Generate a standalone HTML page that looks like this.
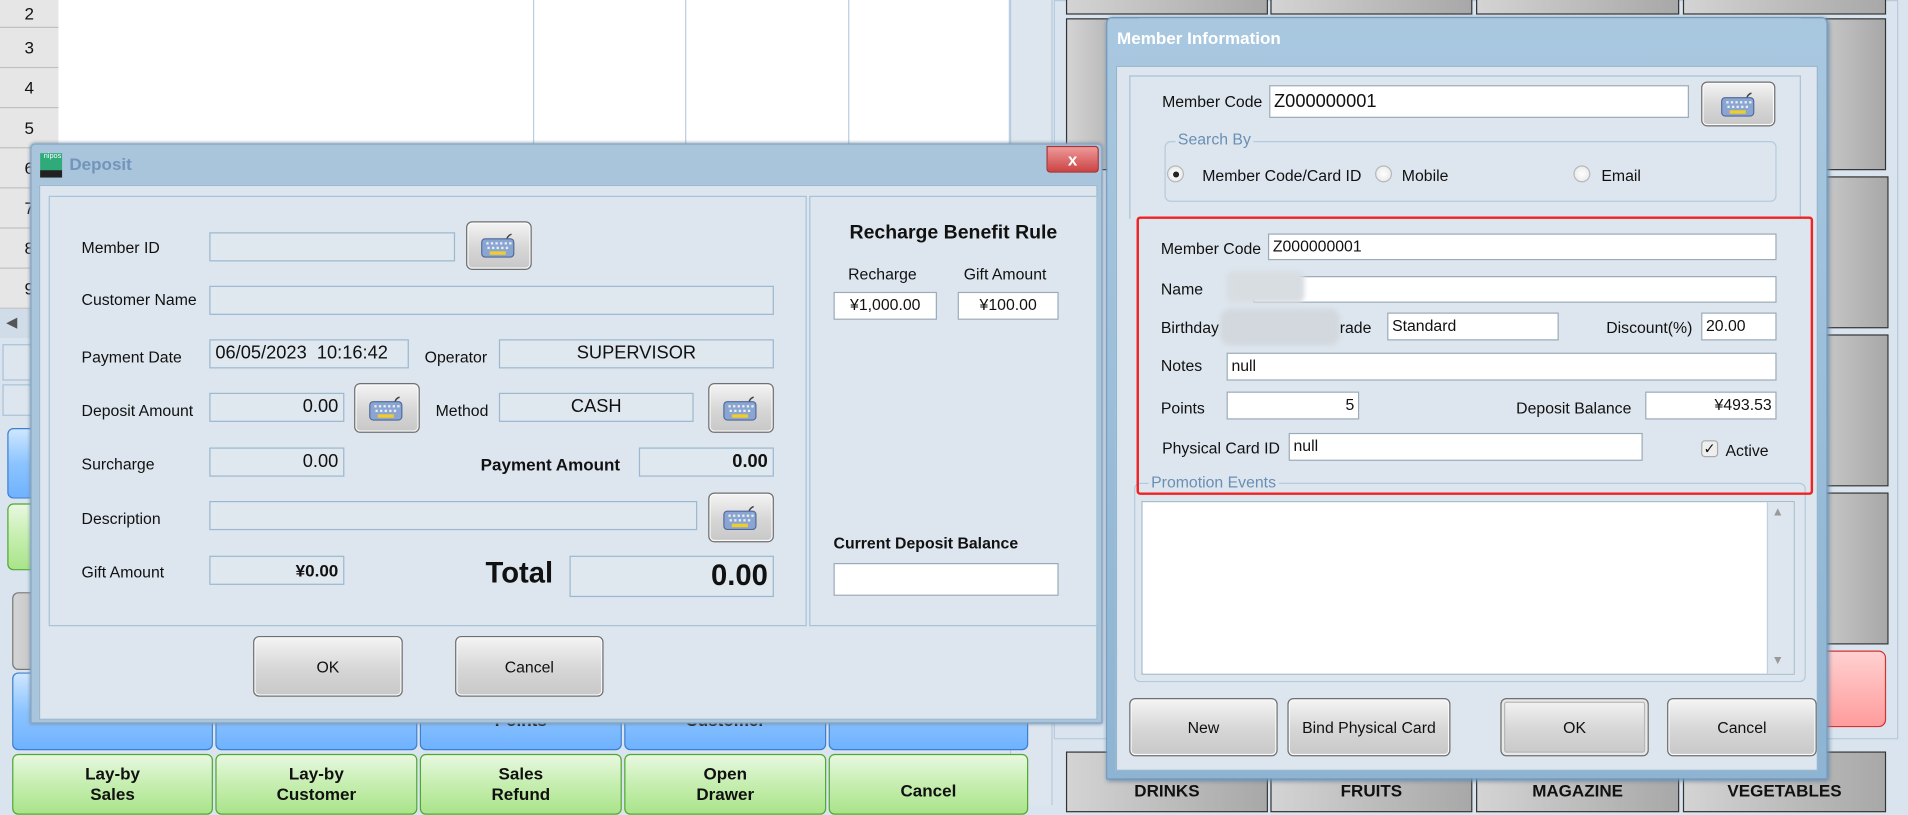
<!DOCTYPE html>
<html><head><meta charset="utf-8"><style>
*{box-sizing:border-box;margin:0;padding:0}
html,body{width:1908px;height:805px;overflow:hidden;background:#d9e4ee}
#w{position:absolute;left:0;top:0;width:1568px;height:662px;transform:scale(1.21684,1.2160);transform-origin:0 0;font-family:"Liberation Sans",sans-serif;font-size:13px;color:#111}
.a{position:absolute}
.t{position:absolute;white-space:nowrap}
.f{position:absolute;background:#dfe7ef;border:1px solid #9cb8d0;font-size:15px;line-height:22px;padding:0 4px;white-space:nowrap}
.wf{position:absolute;background:#fff;border:1px solid #9aaab8;font-size:14px;line-height:20px;padding:0 3px;white-space:nowrap}
.btn{position:absolute;border:1px solid #707070;border-radius:5px;background:linear-gradient(#f4f4f4,#d6d6d6 55%,#c8c8c8);box-shadow:inset 0 0 0 1px #fafafa;display:flex;align-items:center;justify-content:center;font-size:13px;color:#111}
.gb{position:absolute;border:1px solid #333;background:linear-gradient(90deg,#d4d4d4,#bdbdbd 50%,#a8a8a8)}
.bl{position:absolute;border:1px solid #3a7fd0;border-radius:5px;background:linear-gradient(#cfe6ff,#8cc4ff 50%,#70b2ff)}
.gr{position:absolute;border:1px solid #4fa830;border-radius:5px;background:linear-gradient(#e8f8e0,#c6eeb0 50%,#a9e48a);display:flex;align-items:center;justify-content:center;text-align:center;font-weight:bold;font-size:14px;line-height:17px}
.grp{position:absolute;border:1px solid #a8c2d8}
.rb{position:absolute;width:14px;height:14px;border-radius:50%;border:1px solid #b8b8b8;background:radial-gradient(#fff,#e4e4e4)}
</style></head><body><div id="w">

<!-- background grid -->
<div class="a" style="left:0;top:0;width:48px;height:254px;background:#e6e6e6"></div>
<div class="a" style="left:48px;top:0;width:782px;height:254px;background:#fff"></div>
<div class="a" style="left:438px;top:0;width:1px;height:254px;background:#b9cde0"></div>
<div class="a" style="left:563px;top:0;width:1px;height:254px;background:#b9cde0"></div>
<div class="a" style="left:697px;top:0;width:1px;height:254px;background:#b9cde0"></div>
<div class="a" style="left:829px;top:0;width:1px;height:254px;background:#b9cde0"></div>
<div class="t" style="left:0;top:0;width:48px;font-size:14px;line-height:22px;text-align:center;border-bottom:1px solid #c0c0c0">2</div>
<div class="t" style="left:0;top:23px;width:48px;font-size:14px;line-height:32px;text-align:center;border-bottom:1px solid #c0c0c0">3</div>
<div class="t" style="left:0;top:56px;width:48px;font-size:14px;line-height:32px;text-align:center;border-bottom:1px solid #c0c0c0">4</div>
<div class="t" style="left:0;top:89px;width:48px;font-size:14px;line-height:32px;text-align:center;border-bottom:1px solid #c0c0c0">5</div>
<div class="t" style="left:0;top:122px;width:48px;font-size:14px;line-height:32px;text-align:center;border-bottom:1px solid #c0c0c0">6</div>
<div class="t" style="left:0;top:155px;width:48px;font-size:14px;line-height:32px;text-align:center;border-bottom:1px solid #c0c0c0">7</div>
<div class="t" style="left:0;top:188px;width:48px;font-size:14px;line-height:32px;text-align:center;border-bottom:1px solid #c0c0c0">8</div>
<div class="t" style="left:0;top:221px;width:48px;font-size:14px;line-height:32px;text-align:center;border-bottom:1px solid #c0c0c0">9</div>
<div class="a" style="left:0;top:254px;width:830px;height:24px;background:#d0dce8"></div>
<div class="t" style="left:5px;top:258px;font-size:12px;color:#555">◀</div>
<div class="a" style="left:2px;top:283px;width:826px;height:30px;border:1px solid #a8c2d8;background:#dde6ee"></div>
<div class="a" style="left:2px;top:316px;width:826px;height:26px;border:1px solid #a8c2d8;background:#dde6ee"></div>
<div class="bl" style="left:6px;top:352px;width:200px;height:58px"></div>
<div class="gr" style="left:6px;top:414px;width:200px;height:55px"></div>
<div class="gb" style="left:10px;top:487px;width:60px;height:64px;border-radius:5px;border-color:#777"></div>
<div class="a" style="left:830px;top:0;width:35px;height:662px;background:#dde6ee;border-left:1px solid #b8cadb;border-right:1px solid #b8cadb"></div>

<div class="bl" style="left:10px;top:553px;width:165px;height:64px"></div>
<div class="bl" style="left:177px;top:553px;width:166px;height:64px"></div>
<div class="bl" style="left:345px;top:553px;width:166px;height:64px"></div>
<div class="bl" style="left:513px;top:553px;width:166px;height:64px"></div>
<div class="bl" style="left:681px;top:553px;width:164px;height:64px"></div>
<div class="t" style="left:345px;top:584px;width:166px;text-align:center;font-weight:bold;font-size:14px">Points</div>
<div class="t" style="left:513px;top:584px;width:166px;text-align:center;font-weight:bold;font-size:14px">Customer</div>
<div class="gr" style="left:10px;top:620px;width:165px;height:50px">Lay-by<br>Sales</div>
<div class="gr" style="left:177px;top:620px;width:166px;height:50px">Lay-by<br>Customer</div>
<div class="gr" style="left:345px;top:620px;width:166px;height:50px">Sales<br>Refund</div>
<div class="gr" style="left:513px;top:620px;width:166px;height:50px">Open<br>Drawer</div>
<div class="gr" style="left:681px;top:620px;width:164px;height:50px;padding-top:10px">Cancel</div>

<!-- right background -->
<div class="a" style="left:866px;top:0;width:694px;height:608px;border:1px solid #b8cadb"></div>
<div class="gb" style="left:876px;top:-5px;width:166px;height:17px"></div>
<div class="gb" style="left:1044px;top:-5px;width:166px;height:17px"></div>
<div class="gb" style="left:1213px;top:-5px;width:167px;height:17px"></div>
<div class="gb" style="left:1383px;top:-5px;width:167px;height:17px"></div>
<div class="gb" style="left:876px;top:15px;width:60px;height:125px"></div>
<div class="gb" style="left:1480px;top:15px;width:70px;height:125px"></div>
<div class="gb" style="left:1480px;top:145px;width:72px;height:125px"></div>
<div class="gb" style="left:1480px;top:275px;width:72px;height:125px"></div>
<div class="gb" style="left:1480px;top:405px;width:72px;height:125px"></div>
<div class="a" style="left:1480px;top:535px;width:70px;height:63px;border:1px solid #d83030;border-radius:6px;background:linear-gradient(#ffd0d0,#ff9c9c)"></div>
<div class="gb" style="left:876px;top:618px;width:166px;height:50px"></div>
<div class="gb" style="left:1044px;top:618px;width:166px;height:50px"></div>
<div class="gb" style="left:1213px;top:618px;width:167px;height:50px"></div>
<div class="gb" style="left:1383px;top:618px;width:167px;height:50px"></div>
<div class="t" style="left:876px;top:642px;width:166px;text-align:center;font-weight:bold;font-size:14px">DRINKS</div>
<div class="t" style="left:1044px;top:642px;width:166px;text-align:center;font-weight:bold;font-size:14px">FRUITS</div>
<div class="t" style="left:1213px;top:642px;width:167px;text-align:center;font-weight:bold;font-size:14px">MAGAZINE</div>
<div class="t" style="left:1383px;top:642px;width:167px;text-align:center;font-weight:bold;font-size:14px">VEGETABLES</div>

<svg width="0" height="0" style="position:absolute"><defs>
<symbol id="kb" viewBox="0 0 34 24"><path d="M24 6 q1-3 4-4" stroke="#444" fill="none" stroke-width="1.3"/><rect x="2" y="6" width="28" height="16" rx="3" fill="#8aa6d0" stroke="#50679a"/><g fill="#e8eef8"><rect x="6" y="9" width="2" height="2"/><rect x="10" y="9" width="2" height="2"/><rect x="14" y="9" width="2" height="2"/><rect x="18" y="9" width="2" height="2"/><rect x="22" y="9" width="2" height="2"/><rect x="26" y="9" width="2" height="2"/><rect x="7" y="13" width="2" height="2"/><rect x="11" y="13" width="2" height="2"/><rect x="15" y="13" width="2" height="2"/><rect x="19" y="13" width="2" height="2"/><rect x="23" y="13" width="2" height="2"/></g><rect x="9" y="17" width="14" height="3" fill="#f2cc2a"/></symbol></defs></svg>

<!-- Deposit dialog -->
<div class="a" style="left:25px;top:118px;width:881px;height:477px;background:#a9c5dc;border:1px solid #88a8c4;border-radius:4px 4px 0 0;box-shadow:0 0 3px #7890a8"></div>
<div class="a" style="left:33px;top:126px;width:18px;height:20px;background:#2faa7a"></div>
<div class="a" style="left:33px;top:140px;width:18px;height:6px;background:#222"></div>
<div class="t" style="left:36px;top:126px;font-size:6px;color:#fff">nipos</div>
<div class="t" style="left:57px;top:127px;font-weight:bold;font-size:14px;color:#7394bc">Deposit</div>
<div class="a" style="left:860px;top:120px;width:43px;height:22px;background:linear-gradient(#e99,#c44);border:1px solid #a33;border-radius:0 3px 3px 3px;color:#fff;font-weight:bold;font-size:14px;text-align:center;line-height:20px">x</div>
<div class="a" style="left:32px;top:152px;width:870px;height:440px;background:#dde6ee;border:1px solid #9ab8d0"></div>
<div class="grp" style="left:40px;top:161px;width:623px;height:354px"></div>
<div class="grp" style="left:665px;top:161px;width:237px;height:354px"></div>

<div class="t" style="left:67px;top:196px">Member ID</div>
<div class="t" style="left:67px;top:239px">Customer Name</div>
<div class="t" style="left:67px;top:286px">Payment Date</div>
<div class="t" style="left:67px;top:330px">Deposit Amount</div>
<div class="t" style="left:67px;top:374px">Surcharge</div>
<div class="t" style="left:67px;top:419px">Description</div>
<div class="t" style="left:67px;top:463px">Gift Amount</div>
<div class="f" style="left:172px;top:191px;width:202px;height:24px"></div>
<div class="btn" style="left:383px;top:182px;width:54px;height:40px"><svg width="32" height="24"><use href="#kb"/></svg></div>
<div class="f" style="left:172px;top:235px;width:464px;height:24px"></div>
<div class="f" style="left:172px;top:279px;width:164px;height:24px">06/05/2023&nbsp; 10:16:42</div>
<div class="t" style="left:349px;top:286px">Operator</div>
<div class="f" style="left:410px;top:279px;width:226px;height:24px;text-align:center">SUPERVISOR</div>
<div class="f" style="left:172px;top:323px;width:111px;height:24px;text-align:right">0.00</div>
<div class="btn" style="left:291px;top:315px;width:54px;height:41px"><svg width="32" height="24"><use href="#kb"/></svg></div>
<div class="t" style="left:358px;top:330px">Method</div>
<div class="f" style="left:410px;top:323px;width:160px;height:24px;text-align:center">CASH</div>
<div class="btn" style="left:582px;top:315px;width:54px;height:41px"><svg width="32" height="24"><use href="#kb"/></svg></div>
<div class="f" style="left:172px;top:368px;width:111px;height:24px;text-align:right">0.00</div>
<div class="t" style="left:395px;top:374px;font-weight:bold;font-size:14px">Payment Amount</div>
<div class="f" style="left:525px;top:368px;width:111px;height:24px;text-align:right;font-weight:bold">0.00</div>
<div class="f" style="left:172px;top:412px;width:401px;height:24px"></div>
<div class="btn" style="left:582px;top:405px;width:54px;height:41px"><svg width="32" height="24"><use href="#kb"/></svg></div>
<div class="f" style="left:172px;top:457px;width:111px;height:24px;text-align:right;font-weight:bold;font-size:14px">¥0.00</div>
<div class="t" style="left:399px;top:458px;font-weight:bold;font-size:24px">Total</div>
<div class="f" style="left:468px;top:457px;width:168px;height:34px;text-align:right;font-weight:bold;font-size:24px;line-height:32px">0.00</div>
<div class="t" style="left:665px;top:183px;width:237px;text-align:center;font-weight:bold;font-size:16px">Recharge Benefit Rule</div>
<div class="t" style="left:697px;top:218px">Recharge</div>
<div class="t" style="left:792px;top:218px">Gift Amount</div>
<div class="wf" style="left:685px;top:240px;width:85px;height:23px;text-align:center;font-size:13px">¥1,000.00</div>
<div class="wf" style="left:787px;top:240px;width:83px;height:23px;text-align:center;font-size:13px">¥100.00</div>
<div class="t" style="left:685px;top:439px;font-weight:bold;font-size:13px">Current Deposit Balance</div>
<div class="wf" style="left:685px;top:463px;width:185px;height:27px"></div>
<div class="btn" style="left:208px;top:523px;width:123px;height:50px">OK</div>
<div class="btn" style="left:374px;top:523px;width:122px;height:50px">Cancel</div>

<!-- Member Information dialog -->
<div class="a" style="left:909px;top:14px;width:593px;height:627px;background:linear-gradient(#a9c8e0,#8db4d2);border:1px solid #6f98bd;border-radius:5px 5px 0 0;box-shadow:1px 1px 4px #6a88a4"></div>
<div class="t" style="left:918px;top:23px;font-weight:bold;font-size:14px;color:#fff">Member Information</div>
<div class="a" style="left:917px;top:54px;width:577px;height:580px;background:#dde6ee;border:1px solid #96b4cc"></div>
<div class="grp" style="left:928px;top:62px;width:552px;height:118px;border-bottom:none"></div>
<div class="t" style="left:955px;top:76px">Member Code</div>
<div class="wf" style="left:1043px;top:70px;width:345px;height:27px;font-size:15px;line-height:25px">Z000000001</div>
<div class="btn" style="left:1398px;top:67px;width:61px;height:37px"><svg width="32" height="24"><use href="#kb"/></svg></div>
<div class="a" style="left:957px;top:116px;width:503px;height:50px;border:1px solid #b4cade;border-radius:5px"></div>
<div class="t" style="left:966px;top:107px;color:#6a8fb4;background:#dde6ee;padding:0 2px">Search By</div>
<div class="rb" style="left:959px;top:136px"></div><div class="a" style="left:964px;top:141px;width:5px;height:5px;border-radius:50%;background:#222"></div>
<div class="t" style="left:988px;top:137px">Member Code/Card ID</div>
<div class="rb" style="left:1130px;top:136px"></div>
<div class="t" style="left:1152px;top:137px">Mobile</div>
<div class="rb" style="left:1293px;top:136px"></div>
<div class="t" style="left:1316px;top:137px">Email</div>

<div class="t" style="left:954px;top:197px">Member Code</div>
<div class="wf" style="left:1042px;top:192px;width:418px;height:22px;font-size:13px">Z000000001</div>
<div class="t" style="left:954px;top:230px">Name</div>
<div class="wf" style="left:1030px;top:227px;width:430px;height:22px"></div>
<div class="a" style="left:1008px;top:223px;width:64px;height:26px;background:#d8dde2;filter:blur(2px);border-radius:6px"></div>
<div class="t" style="left:954px;top:262px">Birthday</div>
<div class="a" style="left:1003px;top:254px;width:98px;height:30px;background:#d2d8de;filter:blur(2px);border-radius:8px"></div>
<div class="t" style="left:1101px;top:262px">rade</div>
<div class="wf" style="left:1140px;top:257px;width:141px;height:23px;font-size:13px">Standard</div>
<div class="t" style="left:1320px;top:262px">Discount(%)</div>
<div class="wf" style="left:1398px;top:257px;width:62px;height:23px;font-size:13px">20.00</div>
<div class="t" style="left:954px;top:293px">Notes</div>
<div class="wf" style="left:1008px;top:290px;width:452px;height:23px;font-size:13px">null</div>
<div class="t" style="left:954px;top:328px">Points</div>
<div class="wf" style="left:1008px;top:322px;width:109px;height:23px;font-size:13px;text-align:right">5</div>
<div class="t" style="left:1246px;top:328px">Deposit Balance</div>
<div class="wf" style="left:1352px;top:322px;width:108px;height:23px;font-size:13px;text-align:right">¥493.53</div>
<div class="t" style="left:955px;top:361px">Physical Card ID</div>
<div class="wf" style="left:1059px;top:356px;width:291px;height:23px;font-size:13px">null</div>
<div class="a" style="left:1398px;top:362px;width:14px;height:14px;border:1px solid #aaa;border-radius:3px;background:#eee;font-size:12px;line-height:12px;text-align:center">✓</div>
<div class="t" style="left:1418px;top:363px">Active</div>

<div class="a" style="left:932px;top:397px;width:552px;height:164px;border:1px solid #b4cade;border-radius:5px"></div>
<div class="t" style="left:944px;top:389px;color:#6a8fb4;background:#dde6ee;padding:0 2px">Promotion Events</div>
<div class="a" style="left:938px;top:412px;width:537px;height:143px;background:#fff;border:1px solid #a8bccc"></div>
<div class="a" style="left:1452px;top:413px;width:22px;height:141px;background:#dde6ee;border-left:1px solid #c0d0dc"></div>
<div class="t" style="left:1456px;top:416px;font-size:10px;color:#999">▲</div>
<div class="t" style="left:1456px;top:538px;font-size:10px;color:#999">▼</div>
<div class="a" style="left:934px;top:178px;width:556px;height:229px;border:2px solid #f02222;border-radius:3px"></div>

<div class="btn" style="left:928px;top:574px;width:122px;height:48px">New</div>
<div class="btn" style="left:1058px;top:574px;width:134px;height:48px">Bind Physical Card</div>
<div class="btn" style="left:1233px;top:574px;width:122px;height:48px;box-shadow:inset 0 0 0 2px #e8e8e8,inset 0 0 0 3px #b8b8b8">OK</div>
<div class="btn" style="left:1370px;top:574px;width:123px;height:48px">Cancel</div>

</div></body></html>
